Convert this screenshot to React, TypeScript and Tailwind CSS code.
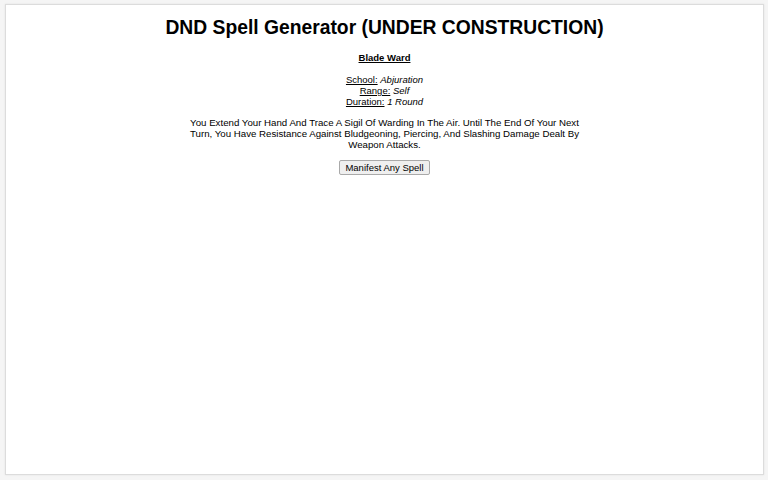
import React from 'react';

const spell = {
  name: 'Blade Ward',
  school: 'Abjuration',
  range: 'Self',
  duration: '1 Round',
  description:
    'you extend your hand and trace a sigil of warding in the air. until the end of your next turn, you have resistance against bludgeoning, piercing, and slashing damage dealt by weapon attacks.',
};

const App: React.FC = () => {
  return (
    <div className="w-[768px] h-[480px] bg-[#f5f5f5] pt-[4px] pl-[5px] pr-[4px] pb-[5px] font-['Liberation_Sans',Arial,sans-serif] text-black">
      <div className="h-full bg-white border border-[#dcdcdc] shadow-[0_0_2px_rgba(0,0,0,0.08)] flex flex-col items-center">
        <h1 className="mt-[11px] text-[19.3px] leading-[24px] font-bold">DND Spell Generator (UNDER CONSTRUCTION)</h1>

        <div className="mt-[12px] flex flex-col items-center text-[9.5px] leading-[11px]">
          <p className="font-bold underline">{spell.name}</p>

          <div className="mt-[11px] flex flex-col items-center">
            <p>
              <span className="underline">School:</span> <em>{spell.school}</em>
            </p>
            <p>
              <span className="underline">Range:</span> <em>{spell.range}</em>
            </p>
            <p>
              <span className="underline">Duration:</span> <em>{spell.duration}</em>
            </p>
          </div>

          <p className="mt-[10px] w-[400px] text-center text-[9.7px] capitalize">{spell.description}</p>

          <button className="mt-[10px] px-[5px] h-[15px] text-[9.5px] leading-[13px] bg-[#efefef] border border-[#a9a9a9] rounded-[2px]">
            Manifest Any Spell
          </button>
        </div>
      </div>
    </div>
  );
};

export default App;
